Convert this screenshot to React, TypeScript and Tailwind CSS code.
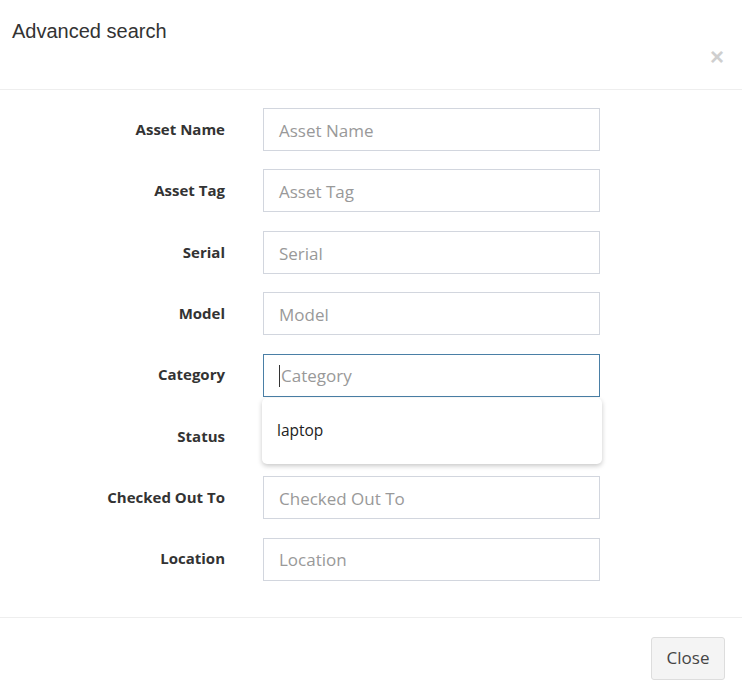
const fields = [
  "Asset Name",
  "Asset Tag",
  "Serial",
  "Model",
  "Category",
  "Status",
  "Checked Out To",
  "Location",
];

export default function App() {
  return (
    <div className="w-[742px] h-[697px] bg-white text-[#333] overflow-hidden">
      {/* Header */}
      <div className="relative h-[90px] border-b border-[#eeeeee] px-3 pt-[18px]">
        <h4 className="text-[20px] leading-[26px] font-['Liberation_Sans',Arial,sans-serif] text-[#333]">
          Advanced search
        </h4>
        <button className="absolute right-[18px] top-[45px] text-[24px] leading-[24px] font-bold text-[#cfcfcf] font-['Liberation_Sans',Arial,sans-serif]">
          ×
        </button>
      </div>

      {/* Body */}
      <div className="pt-[18px] pb-[10px] font-['Open_Sans',sans-serif]">
        <div className="flex flex-col gap-[18.4px]">
          {fields.map((f) => (
            <div key={f} className="flex items-center h-[43px]">
              <label className="w-[225px] text-right text-[15px] font-bold text-[#333] -mt-px">
                {f}
              </label>
              <div className="relative ml-[38px] w-[337px] h-[43px]">
                {f === "Category" ? (
                  <>
                    <div className="h-full border border-[#4a7fa6] flex items-center pl-[15px] pt-[2px] text-[17px] text-[#999]">
                      <span className="w-px h-[22px] bg-[#333] mr-px" />
                      Category
                    </div>
                    <div className="absolute z-10 left-[-1px] top-[44px] w-[340px] h-[66px] bg-white rounded-[5px] shadow-[0_2px_5px_rgba(0,0,0,0.22)] flex items-center pl-[15px] text-[15.5px] text-[#222]">
                      laptop
                    </div>
                  </>
                ) : f === "Status" ? (
                  <div className="h-full border border-[#d2d6de]" />
                ) : (
                  <div className="h-full border border-[#d2d6de] flex items-center pl-[15px] pt-[2px] text-[17px] text-[#999]">
                    {f}
                  </div>
                )}
              </div>
            </div>
          ))}
        </div>
      </div>

      {/* Footer */}
      <div className="mt-[26px] border-t border-[#eeeeee] flex justify-end pr-[17px] pt-[19px] font-['Open_Sans',sans-serif]">
        <button className="w-[74px] h-[43px] bg-[#f4f4f4] border border-[#dddddd] rounded-[3px] text-[17px] text-[#444]">
          Close
        </button>
      </div>
    </div>
  );
}
